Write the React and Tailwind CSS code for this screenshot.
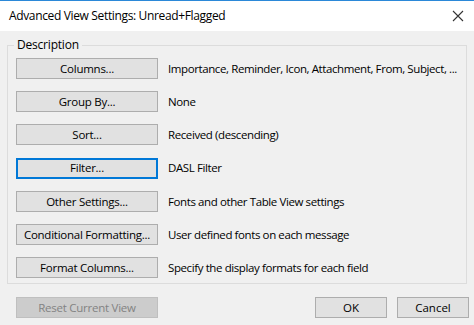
const rows = [
  { label: 'Columns...', desc: 'Importance, Reminder, Icon, Attachment, From, Subject, ...' },
  { label: 'Group By...', desc: 'None' },
  { label: 'Sort...', desc: 'Received (descending)' },
  { label: 'Filter...', desc: 'DASL Filter', focus: true },
  { label: 'Other Settings...', desc: 'Fonts and other Table View settings' },
  { label: 'Conditional Formatting...', desc: 'User defined fonts on each message' },
  { label: 'Format Columns...', desc: 'Specify the display formats for each field' },
];

export default function App() {
  return (
    <div className="w-[474px] h-[325px] bg-[#f0f0f0] text-[11.5px] text-black overflow-hidden flex flex-col border-t border-[#2b88d8]" style={{ fontFamily: '"Open Sans", "Noto Sans", sans-serif' }}>
      <div className="h-[30px] bg-white flex items-center justify-between pl-[9px] pr-[9px] shrink-0">
        <span className="text-[12px] tracking-[-0.35px]">Advanced View Settings: Unread+Flagged</span>
        <svg width="12" height="12" viewBox="0 0 12 12" className="mr-[1px]">
          <path d="M1 1L11 11M11 1L1 11" stroke="#333" strokeWidth="1.1" />
        </svg>
      </div>

      <div className="relative mx-[7px] mt-[14px] border border-[#dcdcdc] h-[239px] px-[8px] pt-[12px]">
        <span className="absolute -top-[9px] left-[6px] bg-[#f0f0f0] px-[3px] leading-[16px] text-[12px] tracking-[-0.2px]">Description</span>
        <div className="flex flex-col gap-[12.2px]">
          {rows.map((r) => (
            <div key={r.label} className="flex items-center h-[21px]">
              <div className={`w-[142px] h-[21px] shrink-0 flex items-center justify-center border ${r.focus ? 'border-[#0078d7] bg-[#e1e1e1] shadow-[inset_0_0_0_1px_#0078d7]' : 'border-[#adadad] bg-[#e1e1e1]'} tracking-[-0.25px]`}>
                {r.label}
              </div>
              <span className="ml-[10px] whitespace-nowrap tracking-[-0.4px]">{r.desc}</span>
            </div>
          ))}
        </div>
      </div>

      <div className="flex items-center mt-[13px] px-[16px]">
        <div className="w-[142px] h-[21px] flex items-center justify-center border border-[#bfbfbf] bg-[#cccccc] text-[#838383] tracking-[-0.25px]">
          Reset Current View
        </div>
        <div className="ml-auto flex gap-[10px] mr-[-11px]">
          <div className="w-[72px] h-[21px] flex items-center justify-center border border-[#adadad] bg-[#e1e1e1]">OK</div>
          <div className="w-[72px] h-[21px] flex items-center justify-center border border-[#adadad] bg-[#e1e1e1]">Cancel</div>
        </div>
      </div>
    </div>
  );
}
